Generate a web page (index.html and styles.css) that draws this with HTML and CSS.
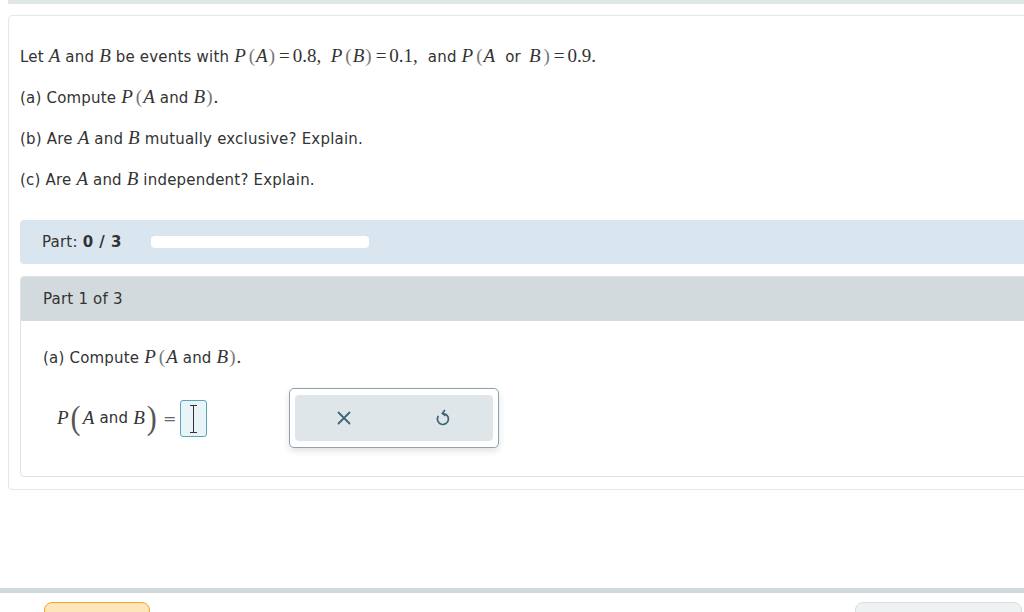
FILE: index.html
```html
<!DOCTYPE html>
<html>
<head>
<meta charset="utf-8">
<link rel="stylesheet" href="styles.css">
</head>
<body>
<div class="topbar"></div>
<div class="outer">
  <div class="q q1">Let <i class="m">A</i> and <i class="m">B</i> be events with <span class="mx"><i>P</i><span class="pa">(</span><i>A</i><span class="pa">)</span><span class="e">=</span>0.8,&nbsp; <i>P</i><span class="pa">(</span><i>B</i><span class="pa">)</span><span class="e">=</span>0.1,</span>&nbsp; and <span class="mx"><i>P</i><span class="pa">(</span><i>A</i></span><span class="w">or</span><span class="mx"><i>B</i><span class="pa">)</span><span class="e">=</span>0.9.</span></div>
  <div class="q">(a) Compute <span class="mx"><i>P</i><span class="pa">(</span><i>A</i></span> and <span class="mx"><i>B</i><span class="pc">)</span>.</span></div>
  <div class="q">(b) Are <i class="m">A</i> and <i class="m">B</i> mutually exclusive? Explain.</div>
  <div class="q">(c) Are <i class="m">A</i> and <i class="m">B</i> independent? Explain.</div>

  <div class="partbar">
    <span>Part: <b>0 / 3</b></span>
    <div class="progress"></div>
  </div>

  <div class="partcard">
    <div class="parthead">Part 1 of 3</div>
    <div class="partbody">
      <div class="q qa">(a) Compute <span class="mx"><i>P</i><span class="pa">(</span><i>A</i></span> and <span class="mx"><i>B</i><span class="pc">)</span>.</span></div>
      <div class="answer">
        <div class="expr">
          <i class="m">P</i><span class="bigp">(</span><i class="m">A</i> <span class="and">and</span> <i class="m">B</i><span class="bigp">)</span><span class="eq">=</span>
          <div class="inputbox"><div class="ibeam"></div></div>
        </div>
        <div class="actions">
          <div class="actinner">
            <div class="btn">
              <svg width="16" height="16" viewBox="0 0 16 16"><path d="M2.5 2.5 L13.5 13.5 M13.5 2.5 L2.5 13.5" stroke="#3d6676" stroke-width="1.8" fill="none" stroke-linecap="round"/></svg>
            </div>
            <div class="btn">
              <svg width="16" height="18" viewBox="0 0 16 18"><path d="M7.5 4.5 A5.5 5.5 0 1 1 3 7.5" stroke="#3d6676" stroke-width="1.7" fill="none" stroke-linecap="round"/><path d="M9.5 1.5 L7.3 4.4 L10 6.4" stroke="#3d6676" stroke-width="1.7" fill="none" stroke-linecap="round" stroke-linejoin="round"/></svg>
            </div>
          </div>
        </div>
      </div>
    </div>
  </div>
</div>
<div class="footer">
  <div class="fbtn orange"></div>
  <div class="fbtn gray"></div>
</div>
</body>
</html>
```

FILE: styles.css
```css
html, body { margin: 0; padding: 0; }
body {
  width: 1024px;
  height: 612px;
  overflow: hidden;
  background: #fff;
  font-family: "DejaVu Sans", Verdana, sans-serif;
  font-size: 15px;
  letter-spacing: 0.2px;
  color: #333;
}
.topbar {
  margin-left: 8px;
  height: 4px;
  background: #dfe6e6;
}
.outer {
  margin: 11px 0 0 8px;
  width: 1040px;
  border: 1px solid #e3e8e9;
  border-radius: 4px;
  padding: 30px 0 12px 11px;
  box-sizing: border-box;
}
.q {
  height: 20px;
  line-height: 20px;
  margin-bottom: 21px;
  white-space: nowrap;
}
i.m, .mx {
  font-family: "Liberation Serif", "Times New Roman", serif;
  font-size: 19px;
  letter-spacing: 0;
}
.mx i { font-style: italic; }
i.m { font-style: italic; }
.pa { color: #777; font-style: normal; margin: 0 1px 0 3px; }
.pa + i + .pa { margin: 0 1px 0 1px; }
.pc { color: #777; margin: 0 1px 0 1px; }
.e { margin: 0 3px; }
.w { margin: 0 8px 0 10px; }
.partbar {
  margin-top: 31px;
  height: 44px;
  background: #dae6ef;
  border-radius: 4px 0 0 4px;
  display: flex;
  align-items: center;
  padding-left: 22px;
  gap: 29px;
}
.partbar b { font-weight: bold; letter-spacing: 0.5px; }
.progress {
  width: 218px;
  height: 12px;
  background: #fff;
  border-radius: 4px;
}
.partcard {
  margin-top: 12px;
  border: 1px solid #dde3e5;
  border-radius: 4px;
  overflow: hidden;
}
.parthead {
  height: 44px;
  line-height: 44px;
  background: #d2dadd;
  padding-left: 22px;
}
.partbody {
  padding: 26px 0 28px 22px;
}
.qa { margin-bottom: 21px; }
.answer {
  display: flex;
  align-items: center;
  gap: 82px;
}
.expr {
  display: flex;
  align-items: center;
  padding-left: 14px;
}
.expr .m { font-size: 19px; }
.bigp {
  font-family: "Liberation Serif", serif;
  font-size: 30px;
  color: #555;
  margin: 0 2px;
  line-height: 1;
  transform: scaleY(1.1);
  display: inline-block;
}
.and { margin: 0 5px; }
.eq { color: #666; margin: 0 3px 0 4px; font-size: 16px; }
.inputbox {
  width: 25px;
  height: 35px;
  border: 1px solid #5aa6b6;
  border-radius: 3px;
  background: #e8f4f8;
  position: relative;
}
.ibeam {
  position: absolute;
  left: 12px;
  top: 4px;
  width: 1px;
  height: 28px;
  background: #333;
}
.ibeam::before, .ibeam::after {
  content: "";
  position: absolute;
  left: -3px;
  width: 7px;
  height: 1px;
  background: #333;
}
.ibeam::before { top: 0; }
.ibeam::after { bottom: 0; }
.actions {
  width: 210px;
  height: 60px;
  box-sizing: border-box;
  border: 1px solid #8ca3ad;
  border-radius: 5px;
  padding: 6px 5px;
  background: #fff;
  box-shadow: 0 3px 7px rgba(0,0,0,0.12);
}
.actinner {
  height: 100%;
  background: #dfe6e9;
  border-radius: 4px;
  display: flex;
}
.btn {
  flex: 1;
  display: flex;
  align-items: center;
  justify-content: center;
}
.footer {
  margin-top: 98px;
  border-top: 5px solid #d0dadd;
  display: flex;
  justify-content: space-between;
  padding: 9px 2px 0 44px;
}
.fbtn { height: 30px; border-radius: 8px; }
.orange {
  width: 104px;
  background: #fde6b9;
  border: 1px solid #f5a524;
}
.gray {
  width: 165px;
  background: #eef2f3;
  border: 1px solid #d7dee1;
}
```
